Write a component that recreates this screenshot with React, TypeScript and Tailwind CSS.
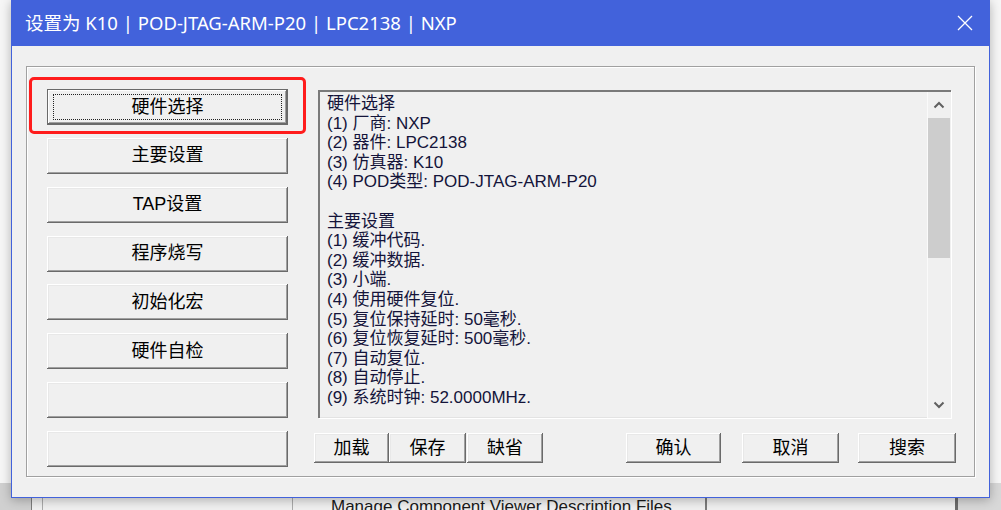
import clsx from 'clsx';

const lines = [
  '硬件选择',
  '(1) 厂商: NXP',
  '(2) 器件: LPC2138',
  '(3) 仿真器: K10',
  '(4) POD类型: POD-JTAG-ARM-P20',
  '',
  '主要设置',
  '(1) 缓冲代码.',
  '(2) 缓冲数据.',
  '(3) 小端.',
  '(4) 使用硬件复位.',
  '(5) 复位保持延时: 50毫秒.',
  '(6) 复位恢复延时: 500毫秒.',
  '(7) 自动复位.',
  '(8) 自动停止.',
  '(9) 系统时钟: 52.0000MHz.',
];

const sideButtons = ['硬件选择', '主要设置', 'TAP设置', '程序烧写', '初始化宏', '硬件自检', '', ''];

function WinButton({ label, className, focused }: { label: string; className?: string; focused?: boolean }) {
  return (
    <button
      className={clsx(
        'relative flex shrink-0 items-center justify-center bg-[#f0f0f0] text-[18px] leading-none text-black',
        focused
          ? 'border border-[#6a6a6a] shadow-[inset_-1px_-1px_#6a6a6a,inset_1px_1px_#ffffff,inset_-2px_-2px_#a0a0a0]'
          : 'shadow-[inset_-1px_-1px_#6a6a6a,inset_1px_1px_#ffffff,inset_-2px_-2px_#a0a0a0,inset_2px_2px_#e8e8e8]',
        className,
      )}
    >
      {focused && <span className="absolute inset-x-[5px] inset-y-[4px] border border-dotted border-[#222]" />}
      <span className="-mt-[1px]">{label}</span>
    </button>
  );
}

function Chevron({ up }: { up?: boolean }) {
  return (
    <svg width="12" height="8" viewBox="0 0 12 8">
      <polyline
        points={up ? '1.5,6.5 6,2 10.5,6.5' : '1.5,1.5 6,6 10.5,1.5'}
        fill="none"
        stroke="#606060"
        strokeWidth="2"
      />
    </svg>
  );
}

export default function App() {
  return (
    <div className="relative h-[510px] w-[1001px] overflow-hidden bg-[#f6f6f6] font-['Liberation_Sans','Noto_Sans_CJK_SC',sans-serif]">
      {/* application behind the dialog */}
      <div className="absolute inset-x-0 bottom-0 top-[483px] flex">
        <div className="w-[31px] bg-[#d0d0d0]" />
        <div className="w-[11px] border-l border-[#7c7c7c] bg-[#f0f0f0]" />
        <div className="w-[250px] border-l border-[#ababab] bg-[#f0f0f0]" />
        <div className="w-[413px] border-l border-[#ababab] bg-[#f0f0f0] pl-[38px] pt-[14px] text-[17px] leading-[20px] whitespace-nowrap text-[#1a1a1a]">
          Manage Component Viewer Description Files
        </div>
        <div className="w-[250px] border-l-2 border-[#7c7c7c] bg-[#f0f0f0]" />
        <div className="w-[3px] bg-[#6c6c6c]" />
        <div className="flex-1 bg-[#d8d8d8]" />
      </div>

      {/* dialog window */}
      <div className="absolute left-[11px] top-0 flex h-[498px] w-[979px] flex-col border-x border-b border-[#4262db] bg-[#f0f0f0] shadow-[0_2px_10px_rgba(0,0,0,0.28)]">
        <div className="-mx-px flex h-[46px] shrink-0 items-center bg-[#4262db] pl-[14px] pr-[17px] text-white">
          <span className="mt-[1px] flex-1 font-['Noto_Sans','Noto_Sans_CJK_SC',sans-serif] text-[18.5px] leading-none">
            设置为 K10 | POD-JTAG-ARM-P20 | LPC2138 | NXP
          </span>
          <svg width="16" height="16" viewBox="0 0 16 16">
            <path d="M1 1 L15 15 M15 1 L1 15" stroke="#ffffff" strokeWidth="1.3" />
          </svg>
        </div>

        <div className="flex-1 pb-[20px] pl-[14px] pr-[14px] pt-[20px]">
          <div className="flex h-full border border-[#a0a0a0] pb-[9px] pl-[20px] pr-[16px] pt-[22px] shadow-[inset_1px_1px_#ffffff,1px_1px_#ffffff]">
            {/* left buttons */}
            <div className="flex w-[241px] flex-col justify-between">
              {sideButtons.map((b, i) => (
                <WinButton key={i} label={b} focused={i === 0} className="h-[36px] w-full" />
              ))}
            </div>

            {/* right side */}
            <div className="ml-[26px] flex w-[642px] flex-col pt-[1px]">
              <div className="mx-[4px] mr-[5px] flex h-[328px] border-l-2 border-t-2 border-[#7a7a7a] bg-[#f0f0f0] shadow-[1px_1px_#ffffff,inset_-1px_-1px_#e3e3e3]">
                <div className="flex-1 overflow-hidden pl-[7px] pt-[2px] text-[17px] leading-[19.6px] text-[#14143a]">
                  {lines.map((l, i) => (
                    <div key={i} className="h-[19.6px] whitespace-pre">
                      {l}
                    </div>
                  ))}
                </div>
                <div className="flex w-[24px] flex-col border-l border-[#fafafa] bg-[#f0f0f0] pr-[1px]">
                  <div className="flex h-[26px] items-center justify-center">
                    <Chevron up />
                  </div>
                  <div className="h-[140px] bg-[#cdcdcd]" />
                  <div className="flex-1" />
                  <div className="flex h-[26px] items-center justify-center">
                    <Chevron />
                  </div>
                </div>
              </div>

              <div className="mt-[15px] flex">
                <WinButton label="加载" className="h-[30px] w-[75px]" />
                <WinButton label="保存" className="h-[30px] w-[77px]" />
                <WinButton label="缺省" className="ml-px h-[30px] w-[76px]" />
                <WinButton label="确认" className="ml-auto h-[30px] w-[95px]" />
                <WinButton label="取消" className="ml-[21px] h-[30px] w-[97px]" />
                <WinButton label="搜索" className="ml-[19px] h-[30px] w-[98px]" />
              </div>
            </div>
          </div>
        </div>

        {/* highlight annotation */}
        <div className="pointer-events-none absolute left-[17px] top-[77px] h-[57px] w-[277px] rounded-[5px] border-[3px] border-[#ff1c1c]" />
      </div>
    </div>
  );
}
